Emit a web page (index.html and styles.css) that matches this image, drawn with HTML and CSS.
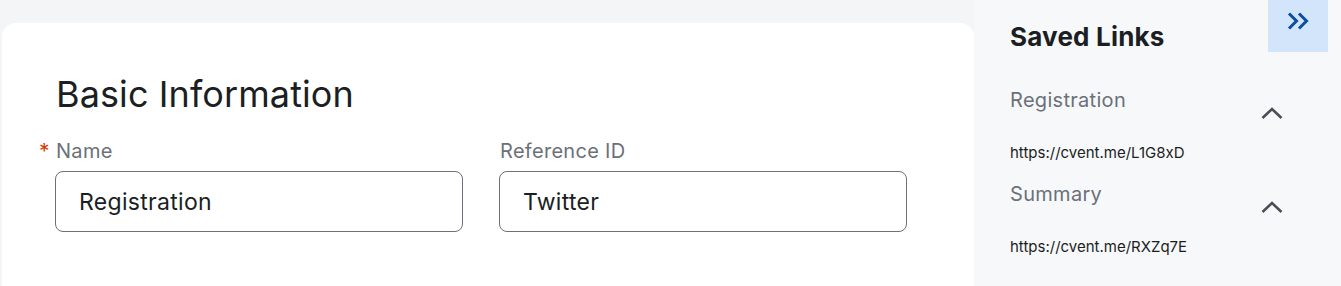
FILE: index.html
```html
<!DOCTYPE html>
<html>
<head>
<meta charset="utf-8">
<link rel="stylesheet" href="styles.css">
</head>
<body>
<div class="page">
  <main class="main">
    <section class="card">
      <h1 class="card-title">Basic Information</h1>
      <div class="fields">
        <div class="field">
          <label class="label"><span class="req">*</span>Name</label>
          <div class="input">Registration</div>
        </div>
        <div class="field">
          <label class="label">Reference ID</label>
          <div class="input">Twitter</div>
        </div>
      </div>
    </section>
  </main>
  <aside class="sidebar">
    <div class="side-head">
      <h2 class="side-title">Saved Links</h2>
      <button class="toggle" aria-label="Collapse">
        <svg width="22" height="20" viewBox="0 0 22 20"><path d="M2 2.5 L9.5 10 L2 17.5 M12 2.5 L19.5 10 L12 17.5" fill="none" stroke="#0b4ea2" stroke-width="3"/></svg>
      </button>
    </div>
    <div class="links">
      <div class="link-item">
        <div class="link-row">
          <span class="link-name">Registration</span>
          <span class="chev"><svg width="22" height="12" viewBox="0 0 22 12"><path d="M1.5 11 L11 2 L20.5 11" fill="none" stroke="#4a4f56" stroke-width="2.6"/></svg></span>
        </div>
        <div class="link-url">https://cvent.me/L1G8xD</div>
      </div>
      <div class="link-item">
        <div class="link-row">
          <span class="link-name">Summary</span>
          <span class="chev"><svg width="22" height="12" viewBox="0 0 22 12"><path d="M1.5 11 L11 2 L20.5 11" fill="none" stroke="#4a4f56" stroke-width="2.6"/></svg></span>
        </div>
        <div class="link-url">https://cvent.me/RXZq7E</div>
      </div>
    </div>
  </aside>
</div>
</body>
</html>
```
FILE: styles.css
```css
* { box-sizing: border-box; }
html, body { margin: 0; padding: 0; }
body {
  font-family: Inter, "Noto Sans", sans-serif;
  background: #f4f5f7;
  color: #1b1e22;
  width: 1341px;
  height: 286px;
  overflow: hidden;
}
.page {
  display: flex;
  height: 286px;
}
.main {
  width: 974px;
  padding: 23px 0 0 2px;
  display: flex;
}
.card {
  flex: 1;
  background: #ffffff;
  border-radius: 14px 14px 0 0;
  padding: 50px 0 0 53px;
}
.card-title {
  margin: 0 0 0 1px;
  font-size: 36px;
  font-weight: 400;
  line-height: 42px;
  color: #1b1e22;
  letter-spacing: 0.1px;
}
.fields {
  display: flex;
  gap: 36px;
  margin-top: 23px;
}
.field {
  width: 408px;
  display: flex;
  flex-direction: column;
}
.label {
  position: relative;
  font-size: 20px;
  line-height: 26px;
  letter-spacing: 0.3px;
  color: #6b7079;
  margin-left: 1px;
}
.req {
  position: absolute;
  left: -17px;
  top: 1px;
  color: #d23a00;
  font-size: 21px;
}
.input {
  margin-top: 7px;
  height: 61px;
  border: 1px solid #6b7079;
  border-radius: 8px;
  padding: 0 23px;
  display: flex;
  align-items: center;
  font-size: 23px;
  letter-spacing: 0.3px;
  color: #1b1e22;
}
.sidebar {
  flex: 1;
  background: #f7f8fa;
  padding-left: 36px;
  padding-right: 13px;
}
.side-head {
  display: flex;
  justify-content: space-between;
  align-items: flex-start;
}
.side-title {
  margin: 21px 0 0 0;
  font-size: 26px;
  line-height: 32px;
  font-weight: 700;
  color: #1b1e22;
  letter-spacing: 0.2px;
}
.toggle {
  width: 60px;
  height: 52px;
  border: none;
  background: #d3e5fa;
  padding: 0 0 10px 0;
  display: flex;
  align-items: center;
  justify-content: center;
}
.links {
  margin-top: 34px;
  display: flex;
  flex-direction: column;
  gap: 19px;
  padding-right: 45px;
}
.link-row {
  display: flex;
  justify-content: space-between;
  align-items: flex-start;
}
.link-name {
  font-size: 20px;
  line-height: 26px;
  letter-spacing: 0.3px;
  color: #6b7079;
}
.chev {
  margin-top: 20px;
  display: flex;
}
.link-url {
  margin-top: 25px;
  font-size: 15px;
  line-height: 18px;
  color: #1b1e22;
}
```
